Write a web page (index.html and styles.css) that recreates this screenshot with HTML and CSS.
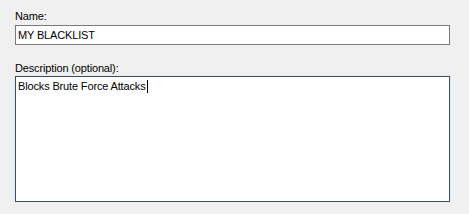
FILE: index.html
```html
<!DOCTYPE html>
<html lang="en">
<head>
    <meta charset="UTF-8">
    <title>Blacklist</title>
    <link rel="stylesheet" href="styles.css">
</head>
<body>

<div class="form">
    <label class="field-label" for="name">Name:</label>
    <input type="text" id="name" class="name-input" value="MY BLACKLIST">

    <label class="field-label desc-label">Description (optional):</label>
    <div class="desc-box" contenteditable="true">Blocks Brute Force Attacks<span class="caret"></span></div>
</div>

</body>
</html>
```

FILE: styles.css
```css
body {
    margin: 0;
    background: #f0f0f0;
    font-family: "Liberation Sans", Arial, sans-serif;
    font-size: 11px;
    letter-spacing: -0.15px;
    color: #000;
}
.form {
    display: flex;
    flex-direction: column;
    padding: 10px 19px 0 15px;
}
.field-label {
    display: block;
    height: 13px;
    line-height: 13px;
    margin-bottom: 2px;
}
.desc-label {
    margin-top: 17px;
    margin-bottom: 1px;
}
.name-input {
    box-sizing: border-box;
    width: 100%;
    height: 20px;
    margin: 0;
    padding: 0 2px;
    border: 1px solid #7a7a7a;
    background: #fff;
    font-family: inherit;
    font-size: 11px;
    letter-spacing: -0.15px;
    color: #000;
    outline: none;
}
.desc-box {
    box-sizing: border-box;
    width: 100%;
    height: 126px;
    padding: 3px 2px;
    border: 1px solid #3e4e5c;
    box-shadow: 0 0 0 1px #e4ecf4;
    background: #fff;
    line-height: 13px;
    outline: none;
}
.caret {
    display: inline-block;
    width: 1px;
    height: 13px;
    margin-left: 1px;
    background: #000;
    vertical-align: top;
}
```
